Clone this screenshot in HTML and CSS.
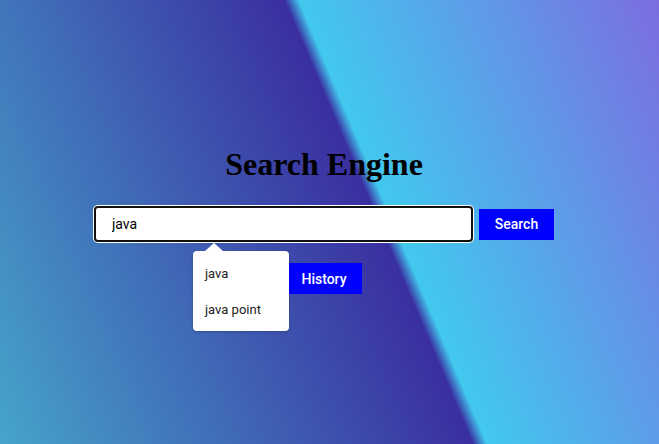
FILE: index.html
```html
<!DOCTYPE html>
<html lang="en">
<head>
<meta charset="utf-8">
<title>Search Engine</title>
<link rel="stylesheet" href="styles.css">
</head>
<body>
<main class="page">
  <h1 class="title">Search Engine</h1>
  <div class="search-row">
    <input class="search-input" type="text" value="java">
    <button class="btn">Search</button>
    <div class="suggest">
      <div class="suggest-item">java</div>
      <div class="suggest-item">java point</div>
    </div>
  </div>
  <div class="history-row">
    <button class="btn">History</button>
  </div>
</main>
</body>
</html>
```
FILE: styles.css
```css
html, body {
  margin: 0;
  height: 100%;
}
body {
  background: linear-gradient(67deg, #46a4cb 0%, #3a2fa1 55.8%, #42c8ee 57.5%, #7b6de1 100%);
  font-family: Roboto, "Liberation Sans", sans-serif;
  overflow: hidden;
}
.page {
  box-sizing: border-box;
  height: 100%;
  padding: 146px 11px 0 0;
  display: flex;
  flex-direction: column;
  align-items: center;
}
.title {
  margin: 0;
  font-family: "Liberation Serif", "Times New Roman", serif;
  font-size: 32px;
  font-weight: bold;
  color: #000;
}
.search-row {
  position: relative;
  margin-top: 23px;
  display: flex;
  align-items: center;
  gap: 6px;
}
.search-input {
  box-sizing: border-box;
  width: 379px;
  height: 36px;
  padding: 0 16px;
  border: 2px solid #111;
  border-radius: 4px;
  box-shadow: 0 0 0 1px #fff;
  background: #fff;
  font-family: Roboto, "Liberation Sans", sans-serif;
  font-size: 14px;
  color: #000;
  outline: none;
}
.btn {
  box-sizing: border-box;
  width: 75px;
  height: 31px;
  border: none;
  background: #0000ff;
  color: #fff;
  font-family: Roboto, "Liberation Sans", sans-serif;
  font-size: 14px;
  font-weight: 500;
  padding: 0;
}
.history-row {
  margin-top: 21px;
  display: flex;
}
.suggest {
  position: absolute;
  left: 99px;
  top: 45px;
  width: 96px;
  padding: 5px 0 3px;
  background: #fff;
  border-radius: 4px;
  box-shadow: 0 1px 3px rgba(0,0,0,0.2);
  z-index: 2;
}
.suggest::before {
  content: "";
  position: absolute;
  left: 12px;
  top: -8px;
  border-left: 9px solid transparent;
  border-right: 9px solid transparent;
  border-bottom: 8px solid #fff;
}
.suggest-item {
  height: 36px;
  line-height: 36px;
  padding-left: 12px;
  font-size: 13px;
  color: #222;
}
```
